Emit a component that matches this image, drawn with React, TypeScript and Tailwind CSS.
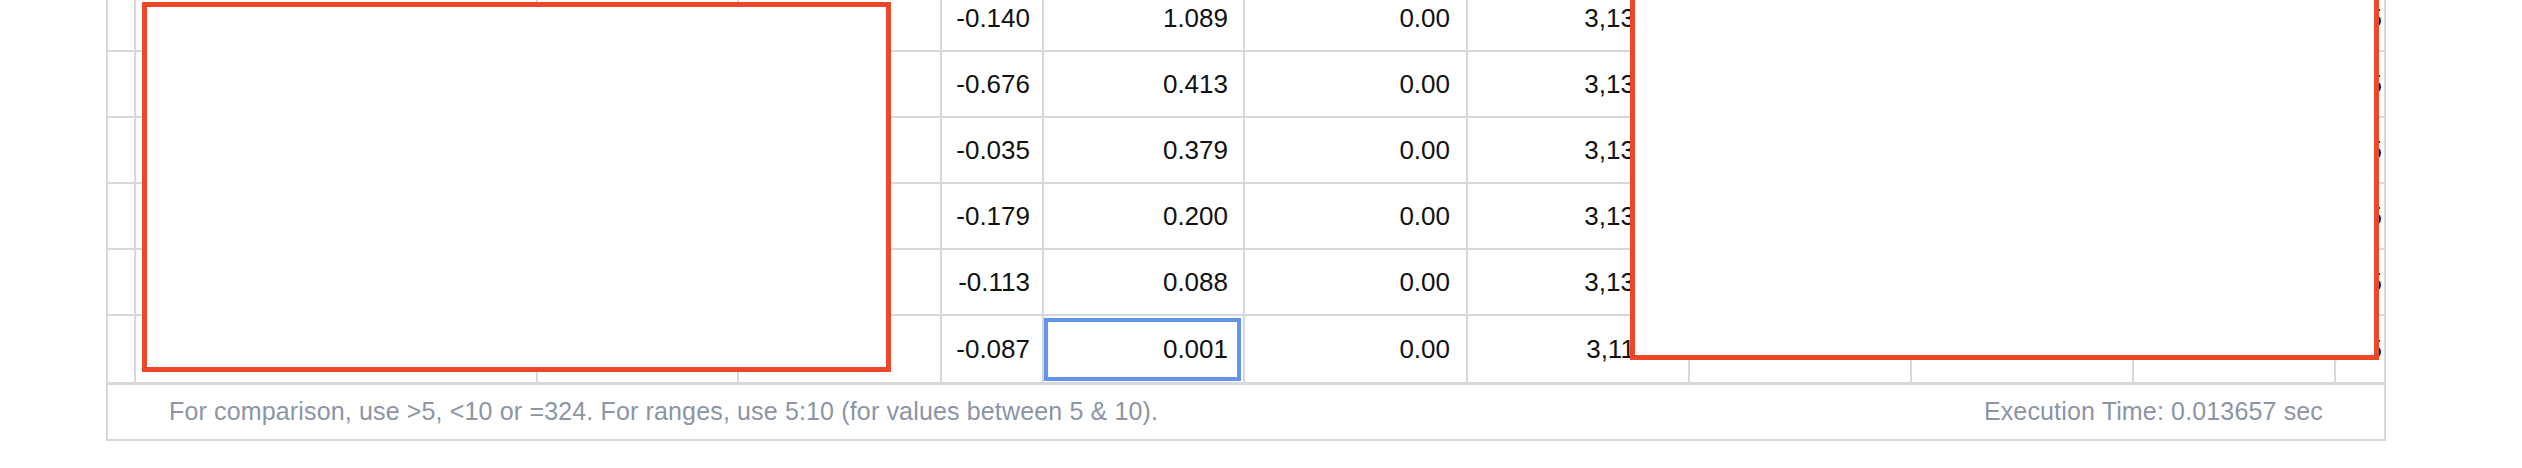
import React from "react";

const colW = [28, 402, 201, 203, 102, 201, 223, 222, 222, 222, 202, 48];

const c4 = ["-0.140", "-0.676", "-0.035", "-0.179", "-0.113", "-0.087"];
const c5 = ["1.089", "0.413", "0.379", "0.200", "0.088", "0.001"];
const c6 = ["0.00", "0.00", "0.00", "0.00", "0.00", "0.00"];
const c7 = ["3,136.5", "3,136.5", "3,136.5", "3,136.5", "3,136.5", "3,115.5"];
const c11 = ["3,135", "3,135", "3,135", "3,135", "3,135", "3,135"];

function Cell({
  w,
  last,
  children,
  pr,
}: {
  w: number;
  last?: boolean;
  children?: React.ReactNode;
  pr?: string;
}) {
  return (
    <div
      className={
        "relative flex h-full shrink-0 items-center justify-end overflow-hidden whitespace-nowrap " +
        (last ? "" : "border-r-2 border-[#d5d9de] ") +
        (pr ?? "pr-[15px]")
      }
      style={{ width: w }}
    >
      {children}
    </div>
  );
}

export default function App() {
  return (
    <div className="relative h-[468px] w-[2522px] overflow-hidden bg-white font-['Liberation_Sans',Arial,sans-serif]">
      <div className="-mt-[14px] ml-[106px] w-[2280px] border-x-2 border-b-2 border-[#d5d9de]">
        <div className="text-[26px] text-[#111]">
          {c4.map((_, i) => (
            <div
              key={i}
              className={
                "flex h-[66px] " + (i < 5 ? "border-b-2 border-[#d5d9de]" : "")
              }
            >
              <Cell w={colW[0]} />
              <Cell w={colW[1]} />
              <Cell w={colW[2]} />
              <Cell w={colW[3]} />
              <Cell w={colW[4]} pr="pr-[12px]">
                {c4[i]}
              </Cell>
              <Cell w={colW[5]}>
                {i === 5 && (
                  <div className="absolute top-[2px] bottom-[1px] left-0 right-[2px] border-4 border-[#6495ed]" />
                )}
                <span className="relative">{c5[i]}</span>
              </Cell>
              <Cell w={colW[6]} pr="pr-[16px]">
                {c6[i]}
              </Cell>
              <Cell w={colW[7]} pr="pr-[17px]">
                {c7[i]}
              </Cell>
              <Cell w={colW[8]} />
              <Cell w={colW[9]} />
              <Cell w={colW[10]} />
              <Cell w={colW[11]} last pr="pr-[2px]">
                {c11[i]}
              </Cell>
            </div>
          ))}
        </div>
        <div className="flex h-[57px] items-center justify-between border-t-[3px] border-[#d5d9de] px-[61px] text-[25px] tracking-[0.15px] text-[#8b95a5]">
          <span>
            For comparison, use &gt;5, &lt;10 or =324. For ranges, use 5:10 (for values between 5 &amp; 10).
          </span>
          <span>Execution Time: 0.013657 sec</span>
        </div>
      </div>

      <div className="absolute left-[142px] top-[2px] h-[370px] w-[749px] border-[5px] border-[#ee4728] bg-white" />
      <div className="absolute left-[1630px] top-[-5px] h-[365px] w-[749px] border-[5px] border-[#ee4728] bg-white" />
    </div>
  );
}
